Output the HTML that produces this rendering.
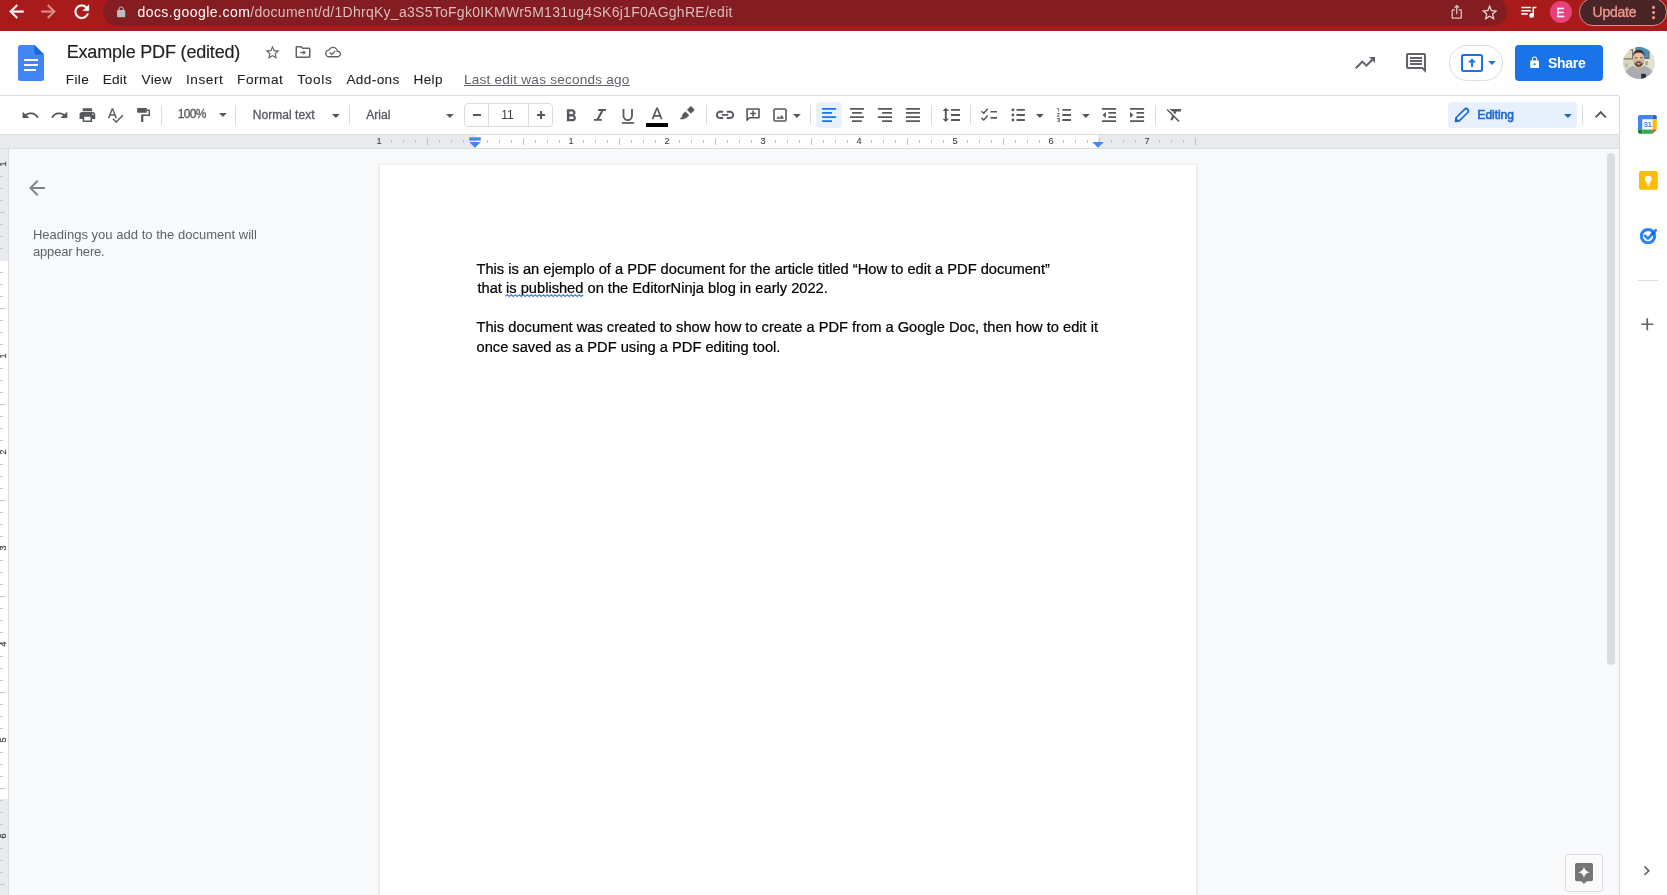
<!DOCTYPE html>
<html>
<head>
<meta charset="utf-8">
<title>Example PDF (edited)</title>
<style>
*{box-sizing:border-box;margin:0;padding:0}
html,body{width:1667px;height:895px;overflow:hidden;background:#fff;font-family:"Liberation Sans",sans-serif;}
body{position:relative}
.abs{position:absolute}
svg{position:absolute;display:block;overflow:visible}
.t{position:absolute;white-space:nowrap;line-height:1}
#chrome{position:absolute;left:0;top:0;width:1667px;height:31px;background:#a91b1b;overflow:hidden}
#pill{position:absolute;left:103px;top:-3px;width:1404px;height:29px;border-radius:14.5px;background:#831d21}
#hdrline{position:absolute;left:0;top:95px;width:1619px;height:1px;background:#dadce0}
.sep{position:absolute;top:105px;width:1px;height:20px;background:#dadce0}
#ruler{position:absolute;left:0;top:134px;width:1619px;height:15px;background:#e8eaed;border-top:1px solid #dadce0;border-bottom:1px solid #dadce0}
#rulerw{position:absolute;left:476px;top:135px;width:622px;height:13px;background:#fff}
#canvas{position:absolute;left:0;top:149px;width:1619px;height:746px;background:#f8f9fa}
#vruler{position:absolute;left:0;top:149px;width:8px;height:746px;background:#fff}
#page{position:absolute;left:380px;top:165px;width:816px;height:760px;background:#fff;box-shadow:0 1px 3px 1px rgba(60,64,67,.15)}
#side{position:absolute;left:1619px;top:96px;width:48px;height:799px;background:#fff;border-left:1px solid #dadce0}
.doc{position:absolute;font-size:14.667px;color:#000;white-space:nowrap;line-height:1}
.sq{text-decoration:underline wavy #4285f4;text-decoration-thickness:1px;text-underline-offset:2px}
#root{position:absolute;left:0;top:0;width:1667px;height:895px;will-change:transform}

</style>
</head>
<body>
<div id="root">
<div id="chrome"><div id="pill"></div>
<svg style="left:6.10px;top:1.00px" width="21.00" height="21.00" viewBox="0 0 24 24"><path fill="#fff" d="M20 11H7.83l5.59-5.59L12 4l-8 8 8 8 1.41-1.41L7.83 13H20v-2z" stroke="#fff" stroke-width="0.500"/></svg>
<svg style="left:38.10px;top:1.00px" width="21.00" height="21.00" viewBox="0 0 24 24"><path fill="#d98a8a" d="M12 4l-1.41 1.41L16.17 11H4v2h12.17l-5.58 5.59L12 20l8-8z" stroke="#d98a8a" stroke-width="0.500"/></svg>
<svg style="left:70.55px;top:0.95px" width="21.50" height="21.50" viewBox="0 0 24 24"><path fill="#fff" d="M17.65 6.35C16.2 4.9 14.21 4 12 4c-4.42 0-7.99 3.58-7.99 8s3.570 8 7.990 8c3.730 0 6.840-2.550 7.730-6h-2.080c-.820 2.330-3.040 4-5.650 4-3.310 0-6-2.690-6-6s2.690-6 6-6c1.660 0 3.140.690 4.220 1.780L13 11h7V4l-2.350 2.350z" stroke="#fff" stroke-width="0.300"/></svg>
<svg style="left:114.85px;top:5.91px" width="12.30" height="12.30" viewBox="0 0 24 24"><path fill="#b7bdc3" d="M18 8h-1V6c0-2.760-2.240-5-5-5S7 3.240 7 6v2H6c-1.100 0-2 .9-2 2v10c0 1.100.9 2 2 2h12c1.100 0 2-.9 2-2V10c0-1.100-.9-2-2-2zm-9-2c0-1.660 1.340-3 3-3s3 1.340 3 3v2H9V6z"/></svg>
<div class="t" id="url1" style="left:137.40px;top:5.000px;font-size:14.000px;color:#fff;letter-spacing:0.470px;">docs.google.com</div>
<div class="t" id="url2" style="left:250.30px;top:5.000px;font-size:14.000px;color:#dcbcbd;letter-spacing:0.271px;">/document/d/1DhrqKy_a3S5ToFgk0IKMWr5M131ug4SK6j1F0AGghRE/edit</div>
<svg style="left:1449.25px;top:4.25px" width="15.50" height="15.50" viewBox="0 0 24 24"><path fill="#dcc6c7" d="M16 5l-1.420 1.420-1.590-1.590V16h-1.980V4.830L9.420 6.420 8 5l4-4 4 4zm4 5v11c0 1.100-.9 2-2 2H6c-1.110 0-2-.9-2-2V10c0-1.110.890-2 2-2h3v2H6v11h12V10h-3V8h3c1.100 0 2 .890 2 2z"/></svg>
<svg style="left:1479.55px;top:2.50px" width="19.30" height="19.30" viewBox="0 0 24 24"><path fill="#e4d2d3" d="M22 9.240l-7.190-.620L12 2 9.190 8.630 2 9.240l5.460 4.730L5.820 21 12 17.270 18.180 21l-1.630-7.030L22 9.240zM12 15.400l-3.760 2.270 1-4.280-3.320-2.880 4.380-.380L12 6.100l1.710 4.040 4.380.380-3.320 2.880 1 4.280L12 15.400z"/></svg>
<svg style="left:1518.90px;top:1.71px" width="19.00" height="19.00" viewBox="0 0 24 24"><path fill="#fff" d="M15 6H3v2h12V6zm0 4H3v2h12v-2zM3 16h8v-2H3v2zM17 6v8.180c-.310-.110-.650-.180-1-.180-1.660 0-3 1.340-3 3s1.340 3 3 3 3-1.340 3-3V8h3V6h-5z"/></svg>
<div class="abs" style="left:1549.5px;top:1px;width:22px;height:22px;border-radius:11px;background:#e9407d"></div>
<div class="t" style="left:1556.20px;top:6.750px;font-size:12.500px;color:#fff;-webkit-text-stroke:0.3px #fff;">E</div>
<div class="abs" style="left:1579.4px;top:-1.700px;width:87.300px;height:27.400px;border-radius:13.700px;background:#492527;border:1px solid #e08a84"></div>
<div class="t" style="left:1592.60px;top:5.000px;font-size:14.000px;color:#f1978d;letter-spacing:-0.258px;-webkit-text-stroke:0.35px #f1978d;">Update</div>
<svg style="left:1650.100px;top:3px" width="7" height="19" viewBox="0 0 7 19"><g fill="#f1978d"><circle cx="3.5" cy="4.400" r="1.550"/><circle cx="3.5" cy="9.500" r="1.550"/><circle cx="3.5" cy="14.600" r="1.550"/></g></svg>
</div>
<div id="hdrline"></div>
<svg style="left:18px;top:45px" width="26" height="36" viewBox="0 0 26 36"><path fill="#4285f4" d="M2.500 0H16.500L26 9.500V33.500Q26 36 23.500 36H2.500Q0 36 0 33.500V2.500Q0 0 2.500 0z"/><path fill="#1967d2" d="M16.500 0L26 9.500H19Q16.500 9.500 16.500 7z"/><rect x="6" y="14" width="14" height="2" fill="#fff"/><rect x="6" y="19" width="14" height="2" fill="#fff"/><rect x="6" y="24" width="12" height="2" fill="#fff"/></svg>
<div class="t" id="title" style="left:66.70px;top:43.000px;font-size:18.000px;color:#202124;letter-spacing:-0.179px;-webkit-text-stroke:0.15px #202124;">Example PDF (edited)</div>
<svg style="left:264.45px;top:43.85px" width="17.00" height="17.00" viewBox="0 0 24 24"><path fill="#5f6368" d="M22 9.240l-7.190-.620L12 2 9.190 8.630 2 9.240l5.460 4.730L5.820 21 12 17.270 18.180 21l-1.630-7.030L22 9.240zM12 15.400l-3.760 2.270 1-4.280-3.320-2.880 4.380-.380L12 6.100l1.710 4.040 4.380.380-3.320 2.880 1 4.280L12 15.400z"/></svg>
<svg style="left:293.50px;top:43.00px" width="18.00" height="18.00" viewBox="0 0 24 24"><path fill="#5f6368" d="M20 6h-8l-2-2H4c-1.100 0-1.990.9-1.990 2L2 18c0 1.100.9 2 2 2h16c1.100 0 2-.9 2-2V8c0-1.100-.9-2-2-2zm0 12H4V6h5.170l2 2H20v10zm-7.500-2.500l3.500-3-3.500-3v2H8.500v2h4v2z"/></svg>
<svg style="left:325.00px;top:44.15px" width="16.10" height="16.10" viewBox="0 0 24 24"><path fill="#5f6368" d="M19.350 10.040C18.670 6.590 15.640 4 12 4 9.110 4 6.600 5.640 5.350 8.040 2.340 8.360 0 10.910 0 14c0 3.310 2.690 6 6 6h13c2.760 0 5-2.240 5-5 0-2.640-2.050-4.780-4.650-4.960zM19 18H6c-2.210 0-4-1.790-4-4s1.790-4 4-4h.710C7.370 7.690 9.480 6 12 6c3.040 0 5.500 2.460 5.500 5.500v.5H19c1.660 0 3 1.340 3 3s-1.340 3-3 3zm-9-3.820l-2.090-2.090L6.500 13.500 10 17l6.010-6.010-1.410-1.410z"/></svg>
<div class="t" id="m0" style="left:65.80px;top:72.700px;font-size:13.600px;color:#202124;letter-spacing:0.371px;-webkit-text-stroke:0.080px #202124;">File</div>
<div class="t" id="m1" style="left:102.80px;top:72.700px;font-size:13.600px;color:#202124;letter-spacing:0.191px;-webkit-text-stroke:0.080px #202124;">Edit</div>
<div class="t" id="m2" style="left:141.40px;top:72.700px;font-size:13.600px;color:#202124;letter-spacing:0.417px;-webkit-text-stroke:0.080px #202124;">View</div>
<div class="t" id="m3" style="left:185.90px;top:72.700px;font-size:13.600px;color:#202124;letter-spacing:0.598px;-webkit-text-stroke:0.080px #202124;">Insert</div>
<div class="t" id="m4" style="left:237.10px;top:72.700px;font-size:13.600px;color:#202124;letter-spacing:0.538px;-webkit-text-stroke:0.080px #202124;">Format</div>
<div class="t" id="m5" style="left:297.30px;top:72.700px;font-size:13.600px;color:#202124;letter-spacing:0.690px;-webkit-text-stroke:0.080px #202124;">Tools</div>
<div class="t" id="m6" style="left:346.40px;top:72.700px;font-size:13.600px;color:#202124;letter-spacing:0.392px;-webkit-text-stroke:0.080px #202124;">Add-ons</div>
<div class="t" id="m7" style="left:413.60px;top:72.700px;font-size:13.600px;color:#202124;letter-spacing:0.307px;-webkit-text-stroke:0.080px #202124;">Help</div>
<div class="t" id="lastedit" style="left:464.00px;top:72.700px;font-size:13.600px;color:#5f6368;letter-spacing:0.217px;text-decoration:underline;text-underline-offset:0.500px;text-decoration-thickness:1px;">Last edit was seconds ago</div>
<svg style="left:1353.20px;top:51.00px" width="24.00" height="24.00" viewBox="0 0 24 24"><path fill="#5f6368" d="M16 6l2.290 2.290-4.880 4.880-4-4L2 16.590 3.410 18l6-6 4 4 6.300-6.290L22 12V6z"/></svg>
<svg style="left:1403.700px;top:51px" width="24" height="24" viewBox="0 0 24 24"><path fill="#5f6368" d="M21.990 4c0-1.100-.890-2-1.990-2H4c-1.100 0-2 .9-2 2v12c0 1.100.9 2 2 2h14l4 4-.010-18zM20 4v13.170L18.830 16H4V4h16zM6 12h12v2H6zm0-3h12v2H6zm0-3h12v2H6z"/></svg>
<div class="abs" style="left:1449px;top:45px;width:54px;height:36px;border-radius:18px;border:1px solid #dadce0;background:#fff"></div>
<svg style="left:1461px;top:54px" width="22" height="18" viewBox="0 0 22 18"><rect x="1" y="1" width="20" height="16" rx="1.500" fill="none" stroke="#1a73e8" stroke-width="2"/><path fill="#1a73e8" d="M11 4.500L7 8.500h3v4.500h2V8.500h3z"/></svg>
<svg style="left:1488.400px;top:61.100px" width="7.800" height="3.900" viewBox="0 0 10 5"><path fill="#1a73e8" d="M0 0h10L5 5z"/></svg>
<div class="abs" style="left:1515px;top:45px;width:88px;height:36px;border-radius:4px;background:#1a73e8"></div>
<svg style="left:1527.90px;top:56.22px" width="13.20" height="13.20" viewBox="0 0 24 24"><path fill="#fff" d="M18 8h-1V6c0-2.760-2.240-5-5-5S7 3.240 7 6v2H6c-1.100 0-2 .9-2 2v10c0 1.100.9 2 2 2h12c1.100 0 2-.9 2-2V10c0-1.100-.9-2-2-2zm-6 9c-1.100 0-2-.9-2-2s.9-2 2-2 2 .9 2 2-.9 2-2 2zm3.100-9H8.900V6c0-1.710 1.390-3.100 3.100-3.100 1.710 0 3.100 1.390 3.100 3.100v2z"/></svg>
<div class="t" id="share" style="left:1548.00px;top:56.000px;font-size:14.000px;color:#fff;font-weight:700;letter-spacing:-0.302px;">Share</div>
<svg style="left:1623px;top:46.900px" width="32" height="32" viewBox="0 0 32 32"><defs><clipPath id="av"><circle cx="16" cy="16" r="16"/></clipPath><filter id="avb" x="-10%" y="-10%" width="120%" height="120%"><feGaussianBlur stdDeviation="0.550"/></filter></defs><g clip-path="url(#av)"><g filter="url(#avb)"><rect x="-2" y="-2" width="36" height="36" fill="#e3e1cf"/><rect x="0" y="2" width="10" height="10.500" fill="#70726e"/><rect x="1" y="3.300" width="8" height="8" fill="#dcd9b4"/><rect x="12.500" y="0" width="14" height="12" fill="#5d6a70"/><rect x="13.500" y="0.500" width="12" height="10.300" fill="#4a93b8"/><rect x="0" y="13" width="10" height="6" fill="#d9d6c0"/><rect x="2" y="16.500" width="3" height="4" fill="#b5c09c"/><rect x="22" y="14" width="3" height="4" fill="#a3b78e"/><path d="M-1 33Q0 23 10 18.500L15.500 22.500 21.500 18.500Q31 22 33 33z" fill="#a9adb3"/><path d="M12.300 19L15.500 25.500 19 19z" fill="#d4a58b"/><rect x="18.200" y="26.800" width="4.700" height="5" fill="#2a2f3a"/><ellipse cx="15.700" cy="11.300" rx="5.500" ry="7.700" fill="#deb096"/><ellipse cx="15.700" cy="9.500" rx="3.200" ry="2.800" fill="#ecc5ad"/><path d="M10 9.500Q9.800 2.800 15.700 2.800T21.500 9.500Q20.500 5.800 15.700 5.600T10 9.500z" fill="#3b2b23"/><path d="M10.400 13Q10.800 19.800 15.700 19.800T21 13Q20.500 16.300 18.900 16.600Q18.300 14.300 15.700 14.300T12.500 16.600Q10.900 16.300 10.400 13z" fill="#54433c"/><path d="M13.300 16.300Q15.700 15.300 18.100 16.300Q17.500 18 15.700 18T13.300 16.300z" fill="#c99a84"/><rect x="12.200" y="10.200" width="2.200" height="1" fill="#5a4a44"/><rect x="17" y="10.200" width="2.200" height="1" fill="#5a4a44"/></g></g></svg>
<div class="sep" style="left:161.0px"></div>
<div class="sep" style="left:234.9px"></div>
<div class="sep" style="left:349.1px"></div>
<div class="sep" style="left:706.0px"></div>
<div class="sep" style="left:810.0px"></div>
<div class="sep" style="left:931.0px"></div>
<div class="sep" style="left:970.1px"></div>
<div class="sep" style="left:1155.0px"></div>
<div class="sep" style="left:1582.1px"></div>
<svg style="left:21.21px;top:106.76px" width="18.90" height="16.63" viewBox="0 0 24 24" preserveAspectRatio="none"><path fill="#55585d" d="M12.500 8c-2.650 0-5.050.990-6.900 2.600L2 7v9h9l-3.620-3.620c1.390-1.160 3.160-1.880 5.120-1.880 3.540 0 6.550 2.310 7.600 5.500l2.370-.780C21.080 11.030 17.150 8 12.500 8z"/></svg>
<svg style="left:50.05px;top:106.76px" width="18.90" height="16.63" viewBox="0 0 24 24" preserveAspectRatio="none"><path fill="#55585d" d="M18.400 10.600C16.550 8.990 14.150 8 11.500 8c-4.650 0-8.580 3.030-9.960 7.220L3.900 16c1.050-3.190 4.050-5.500 7.600-5.500 1.950 0 3.730.720 5.120 1.880L13 16h9V7l-3.600 3.600z"/></svg>
<svg style="left:77.65px;top:105.73px" width="18.80" height="18.24" viewBox="0 0 24 24" preserveAspectRatio="none"><path fill="#55585d" d="M19 8H5c-1.660 0-3 1.340-3 3v6h4v4h12v-4h4v-6c0-1.660-1.340-3-3-3zm-3 11H8v-5h8v5zm3-7c-.550 0-1-.450-1-1s.450-1 1-1 1 .450 1 1-.450 1-1 1zm-1-9H6v4h12V3z"/></svg>
<svg style="left:105.97px;top:105.73px" width="18.20" height="18.20" viewBox="0 0 24 24" preserveAspectRatio="none"><path fill="#55585d" d="M12.450 16h2.090L9.430 3H7.570L2.460 16h2.090l1.120-3h5.640l1.140 3zm-6.020-5L8.500 5.480 10.570 11H6.430zm15.160.590l-8.090 8.090L9.830 16l-1.410 1.410 5.090 5.090L23 13l-1.410-1.410z"/></svg>
<div class="t" id="zoomt" style="left:177.80px;top:108.000px;font-size:12.000px;color:#55585d;letter-spacing:-0.698px;-webkit-text-stroke:0.3px #55585d;">100%</div>
<svg style="left:219.10px;top:113.05px" width="7.80" height="3.90" viewBox="0 0 10 5"><path fill="#55585d" d="M0 0h10L5 5z"/></svg>
<div class="t" style="left:252.70px;top:109.000px;font-size:12.000px;color:#55585d;letter-spacing:0.059px;-webkit-text-stroke:0.3px #55585d;">Normal text</div>
<svg style="left:331.90px;top:114.05px" width="7.80" height="3.90" viewBox="0 0 10 5"><path fill="#55585d" d="M0 0h10L5 5z"/></svg>
<div class="t" style="left:366.30px;top:109.000px;font-size:12.000px;color:#55585d;letter-spacing:-0.002px;-webkit-text-stroke:0.3px #55585d;">Arial</div>
<svg style="left:446.10px;top:114.05px" width="7.80" height="3.90" viewBox="0 0 10 5"><path fill="#55585d" d="M0 0h10L5 5z"/></svg>
<div class="abs" style="left:464px;top:103px;width:89px;height:24px;border:1px solid #dadce0;border-radius:4px"></div>
<div class="abs" style="left:488px;top:104px;width:1px;height:22px;background:#dadce0"></div>
<div class="abs" style="left:528px;top:104px;width:1px;height:22px;background:#dadce0"></div>
<div class="t" style="left:501.20px;top:109.000px;font-size:12.000px;color:#3c4043;">11</div>
<div class="abs" style="left:816px;top:102px;width:26px;height:26px;border-radius:4px;background:#e8f0fe"></div>
<svg style="left:561.42px;top:105.74px" width="20.20" height="20.20" viewBox="0 0 24 24" preserveAspectRatio="none"><path fill="#55585d" d="M15.600 10.790c.970-.670 1.650-1.770 1.650-2.790 0-2.260-1.750-4-4-4H7v14h7.040c2.090 0 3.710-1.700 3.710-3.790 0-1.520-.860-2.820-2.150-3.420zM10 6.500h3c.830 0 1.500.670 1.500 1.500s-.670 1.500-1.500 1.500h-3v-3zm3.500 9H10v-3h3.500c.830 0 1.500.670 1.500 1.500s-.670 1.500-1.500 1.500z"/></svg>
<svg style="left:647.12px;top:104.65px" width="20.16" height="20.16" viewBox="0 0 24 24" preserveAspectRatio="none"><path fill="#55585d" d="M11 3L5.500 17h2.250l1.120-3h6.250l1.120 3h2.250L13 3h-2zm-1.380 9L12 5.670 14.380 12H9.620z"/></svg>
<div class="abs" style="left:646px;top:122.800px;width:22.200px;height:4.200px;background:#000"></div>
<svg style="left:1165.35px;top:104.95px" width="19.30" height="19.30" viewBox="0 0 24 24" preserveAspectRatio="none"><path fill="#55585d" d="M3.270 5L2 6.270l6.970 6.970L6.500 19h3l1.570-3.660L16.730 21 18 19.730 3.550 5.270 3.270 5zM6 5v.180L8.820 8h2.400l-.720 1.680 2.100 2.100L14.210 8H20V5H6z"/></svg>
<svg style="left:792.80px;top:114.05px" width="7.80" height="3.90" viewBox="0 0 10 5"><path fill="#55585d" d="M0 0h10L5 5z"/></svg>
<svg style="left:1036.10px;top:114.05px" width="7.80" height="3.90" viewBox="0 0 10 5"><path fill="#55585d" d="M0 0h10L5 5z"/></svg>
<svg style="left:1082.10px;top:114.05px" width="7.80" height="3.90" viewBox="0 0 10 5"><path fill="#55585d" d="M0 0h10L5 5z"/></svg>
<div class="abs" style="left:1448px;top:102px;width:129px;height:26px;border-radius:4px;background:#e8f0fe"></div>
<svg style="left:0;top:96px" width="1619" height="38" viewBox="0 96 1619 38"><path d="M472.900 115H481M537 115H545.100M541.050 110.900V119.050" stroke="#55585d" stroke-width="2" fill="none"/><rect x="137.100" y="108" width="9.700" height="4.750" rx="0.700" fill="#55585d"/><path d="M146.800 110.300H149.300V115.300H142.200" stroke="#55585d" stroke-width="1.500" fill="none"/><rect x="141.100" y="114.550" width="2.250" height="7.400" fill="#55585d"/><path d="M598.200 109.100H606V111H603.400L599 118.900H601.800V120.800H594V118.900H596.600L601 111H598.200Z" fill="#55585d"/><path d="M623.500 109.100V115.850a4.250 4.250 0 0 0 8.500 0V109.100" stroke="#55585d" stroke-width="1.800" fill="none"/><rect x="622" y="122.100" width="11.900" height="1.700" fill="#55585d"/><path d="M690.900 106.300L694.400 109.900L690.900 113.300L687.400 109.900Z" fill="#55585d" stroke="#55585d" stroke-width="0.700" stroke-linejoin="round"/><path d="M685.400 111.800L689 115.200L686.100 118.100H684.700L683.800 119H680.100L682.500 116.400V114.600Z" fill="#55585d" stroke="#55585d" stroke-width="0.500" stroke-linejoin="round"/><path d="M723.200 111.700H720a3.150 3.150 0 0 0 0 6.300H723.200M726.800 111.700H730a3.150 3.150 0 0 1 0 6.300H726.800M721.800 114.850H728.200" stroke="#55585d" stroke-width="1.900" fill="none"/><path d="M747.100 109H759V117.800H749.500L747.100 120.200Z" stroke="#55585d" stroke-width="1.600" fill="none" stroke-linejoin="round"/><path d="M753.050 110.500V116.400M750.100 113.450H756" stroke="#55585d" stroke-width="1.600" fill="none"/><rect x="774" y="108.950" width="12" height="12.100" rx="1.300" stroke="#55585d" stroke-width="1.600" fill="none"/><path d="M776.200 118.700L778.400 116.300L779.800 117.700L782 115L783.800 118.700Z" fill="#55585d"/><path d="M822.10 108.00H836.10V109.80H822.10ZM822.10 112.07H832.05V113.87H822.10ZM822.10 116.13H836.10V117.93H822.10ZM822.10 120.20H832.05V122.00H822.10Z" fill="#1a73e8"/><path d="M849.95 108.00H863.90V109.80H849.95ZM852.05 112.07H861.80V113.87H852.05ZM849.95 116.13H863.90V117.93H849.95ZM852.05 120.20H861.80V122.00H852.05Z" fill="#55585d"/><path d="M877.90 108.00H891.95V109.80H877.90ZM882.10 112.07H891.95V113.87H882.10ZM877.90 116.13H891.95V117.93H877.90ZM882.10 120.20H891.95V122.00H882.10Z" fill="#55585d"/><path d="M905.90 108.00H919.95V109.80H905.90ZM905.90 112.07H919.95V113.87H905.90ZM905.90 116.13H919.95V117.93H905.90ZM905.90 120.20H919.95V122.00H905.90Z" fill="#55585d"/><path d="M945.800 107.700L949 111H946.750V118.800H949L945.800 122.100L942.600 118.800H944.850V111H942.600Z" fill="#55585d"/><path d="M951 109.900H960M951 114.950H960M951 120H960" stroke="#55585d" stroke-width="1.900" fill="none"/><path d="M981.400 111.200L983.750 113.300L987.700 108.800M981.400 117.900L983.750 120L987.700 115.500" stroke="#55585d" stroke-width="1.500" fill="none"/><path d="M990.500 111.750H997M990.500 117.900H997" stroke="#55585d" stroke-width="1.600" fill="none"/><path d="M1016.500 109.900H1024.900M1016.500 114.950H1024.900M1016.500 120H1024.900" stroke="#55585d" stroke-width="1.900" fill="none"/><circle cx="1012.900" cy="109.900" r="1.450" fill="#55585d"/><circle cx="1012.900" cy="114.950" r="1.450" fill="#55585d"/><circle cx="1012.900" cy="120" r="1.450" fill="#55585d"/><path d="M1062.300 109.900H1071M1062.300 114.950H1071M1062.300 120H1071" stroke="#55585d" stroke-width="1.900" fill="none"/><path d="M1057 108.500H1058.700V111.600M1057.100 113.500H1059.600L1057.200 116.300H1059.800M1057 118.500H1059.500V121.400H1057M1057.800 119.950H1059.500" stroke="#55585d" stroke-width="0.800" fill="none"/><path d="M1101.90 108.00H1116.10V109.80H1101.90ZM1108.40 112.07H1116.10V113.87H1108.40ZM1108.40 116.13H1116.10V117.93H1108.40ZM1101.90 120.20H1116.10V122.00H1101.90ZM1102.500 114.950L1105.900 111.900V118Z" fill="#55585d"/><path d="M1130.00 108.00H1144.10V109.80H1130.00ZM1136.50 112.07H1144.10V113.87H1136.50ZM1136.50 116.13H1144.10V117.93H1136.50ZM1130.00 120.20H1144.10V122.00H1130.00ZM1133.300 114.950L1130 111.900V118Z" fill="#55585d"/></svg>
<svg style="left:0;top:96px" width="1619" height="38" viewBox="0 96 1619 38"><g transform="translate(1458.500 118.500) rotate(-45)"><path d="M-1.200 -2.250H10.750a2.250 2.250 0 0 1 0 4.500H-1.200L-4.200 0Z" fill="none" stroke="#1967d2" stroke-width="1.700" stroke-linejoin="round"/><path d="M-1.200 -2.250L-4.600 0L-1.200 2.250Z" fill="#1967d2"/></g></svg>
<div class="t" id="editing" style="left:1477.50px;top:109.000px;font-size:12.000px;color:#1967d2;letter-spacing:-0.056px;-webkit-text-stroke:0.600px #1967d2;">Editing</div>
<svg style="left:1563.60px;top:114.05px" width="7.80" height="3.90" viewBox="0 0 10 5"><path fill="#1967d2" d="M0 0h10L5 5z"/></svg>
<svg style="left:1589.30px;top:103.34px" width="23.40" height="23.40" viewBox="0 0 24 24" preserveAspectRatio="none"><path fill="#55585d" d="M12 8l-6 6 1.410 1.410L12 10.830l4.590 4.580L18 14z"/></svg>
<div id="ruler"></div><div id="rulerw"></div>
<div class="t rl" style="left:369.0px;top:137.03px;width:20px;text-align:center;font-size:9.300px;color:#3c4043;-webkit-text-stroke:0.100px #3c4043">1</div><div class="abs" style="left:390.7px;top:140px;width:1px;height:3px;background:#bdc1c6"></div><div class="abs" style="left:402.7px;top:140px;width:1px;height:3px;background:#bdc1c6"></div><div class="abs" style="left:414.7px;top:140px;width:1px;height:3px;background:#bdc1c6"></div><div class="abs" style="left:426.7px;top:138px;width:1px;height:7px;background:#bdc1c6"></div><div class="abs" style="left:438.7px;top:140px;width:1px;height:3px;background:#bdc1c6"></div><div class="abs" style="left:450.7px;top:140px;width:1px;height:3px;background:#bdc1c6"></div><div class="abs" style="left:462.7px;top:140px;width:1px;height:3px;background:#bdc1c6"></div><div class="abs" style="left:486.7px;top:140px;width:1px;height:3px;background:#bdc1c6"></div><div class="abs" style="left:498.7px;top:140px;width:1px;height:3px;background:#bdc1c6"></div><div class="abs" style="left:510.7px;top:140px;width:1px;height:3px;background:#bdc1c6"></div><div class="abs" style="left:522.7px;top:138px;width:1px;height:7px;background:#bdc1c6"></div><div class="abs" style="left:534.7px;top:140px;width:1px;height:3px;background:#bdc1c6"></div><div class="abs" style="left:546.7px;top:140px;width:1px;height:3px;background:#bdc1c6"></div><div class="abs" style="left:558.7px;top:140px;width:1px;height:3px;background:#bdc1c6"></div><div class="t rl" style="left:561.0px;top:137.03px;width:20px;text-align:center;font-size:9.300px;color:#3c4043;-webkit-text-stroke:0.100px #3c4043">1</div><div class="abs" style="left:582.7px;top:140px;width:1px;height:3px;background:#bdc1c6"></div><div class="abs" style="left:594.7px;top:140px;width:1px;height:3px;background:#bdc1c6"></div><div class="abs" style="left:606.7px;top:140px;width:1px;height:3px;background:#bdc1c6"></div><div class="abs" style="left:618.7px;top:138px;width:1px;height:7px;background:#bdc1c6"></div><div class="abs" style="left:630.7px;top:140px;width:1px;height:3px;background:#bdc1c6"></div><div class="abs" style="left:642.7px;top:140px;width:1px;height:3px;background:#bdc1c6"></div><div class="abs" style="left:654.7px;top:140px;width:1px;height:3px;background:#bdc1c6"></div><div class="t rl" style="left:657.0px;top:137.03px;width:20px;text-align:center;font-size:9.300px;color:#3c4043;-webkit-text-stroke:0.100px #3c4043">2</div><div class="abs" style="left:678.7px;top:140px;width:1px;height:3px;background:#bdc1c6"></div><div class="abs" style="left:690.7px;top:140px;width:1px;height:3px;background:#bdc1c6"></div><div class="abs" style="left:702.7px;top:140px;width:1px;height:3px;background:#bdc1c6"></div><div class="abs" style="left:714.7px;top:138px;width:1px;height:7px;background:#bdc1c6"></div><div class="abs" style="left:726.7px;top:140px;width:1px;height:3px;background:#bdc1c6"></div><div class="abs" style="left:738.7px;top:140px;width:1px;height:3px;background:#bdc1c6"></div><div class="abs" style="left:750.7px;top:140px;width:1px;height:3px;background:#bdc1c6"></div><div class="t rl" style="left:753.0px;top:137.03px;width:20px;text-align:center;font-size:9.300px;color:#3c4043;-webkit-text-stroke:0.100px #3c4043">3</div><div class="abs" style="left:774.7px;top:140px;width:1px;height:3px;background:#bdc1c6"></div><div class="abs" style="left:786.7px;top:140px;width:1px;height:3px;background:#bdc1c6"></div><div class="abs" style="left:798.7px;top:140px;width:1px;height:3px;background:#bdc1c6"></div><div class="abs" style="left:810.7px;top:138px;width:1px;height:7px;background:#bdc1c6"></div><div class="abs" style="left:822.7px;top:140px;width:1px;height:3px;background:#bdc1c6"></div><div class="abs" style="left:834.7px;top:140px;width:1px;height:3px;background:#bdc1c6"></div><div class="abs" style="left:846.7px;top:140px;width:1px;height:3px;background:#bdc1c6"></div><div class="t rl" style="left:849.0px;top:137.03px;width:20px;text-align:center;font-size:9.300px;color:#3c4043;-webkit-text-stroke:0.100px #3c4043">4</div><div class="abs" style="left:870.7px;top:140px;width:1px;height:3px;background:#bdc1c6"></div><div class="abs" style="left:882.7px;top:140px;width:1px;height:3px;background:#bdc1c6"></div><div class="abs" style="left:894.7px;top:140px;width:1px;height:3px;background:#bdc1c6"></div><div class="abs" style="left:906.7px;top:138px;width:1px;height:7px;background:#bdc1c6"></div><div class="abs" style="left:918.7px;top:140px;width:1px;height:3px;background:#bdc1c6"></div><div class="abs" style="left:930.7px;top:140px;width:1px;height:3px;background:#bdc1c6"></div><div class="abs" style="left:942.7px;top:140px;width:1px;height:3px;background:#bdc1c6"></div><div class="t rl" style="left:945.0px;top:137.03px;width:20px;text-align:center;font-size:9.300px;color:#3c4043;-webkit-text-stroke:0.100px #3c4043">5</div><div class="abs" style="left:966.7px;top:140px;width:1px;height:3px;background:#bdc1c6"></div><div class="abs" style="left:978.7px;top:140px;width:1px;height:3px;background:#bdc1c6"></div><div class="abs" style="left:990.7px;top:140px;width:1px;height:3px;background:#bdc1c6"></div><div class="abs" style="left:1002.7px;top:138px;width:1px;height:7px;background:#bdc1c6"></div><div class="abs" style="left:1014.7px;top:140px;width:1px;height:3px;background:#bdc1c6"></div><div class="abs" style="left:1026.7px;top:140px;width:1px;height:3px;background:#bdc1c6"></div><div class="abs" style="left:1038.7px;top:140px;width:1px;height:3px;background:#bdc1c6"></div><div class="t rl" style="left:1041.0px;top:137.03px;width:20px;text-align:center;font-size:9.300px;color:#3c4043;-webkit-text-stroke:0.100px #3c4043">6</div><div class="abs" style="left:1062.7px;top:140px;width:1px;height:3px;background:#bdc1c6"></div><div class="abs" style="left:1074.7px;top:140px;width:1px;height:3px;background:#bdc1c6"></div><div class="abs" style="left:1086.7px;top:140px;width:1px;height:3px;background:#bdc1c6"></div><div class="abs" style="left:1098.7px;top:138px;width:1px;height:7px;background:#bdc1c6"></div><div class="abs" style="left:1110.7px;top:140px;width:1px;height:3px;background:#bdc1c6"></div><div class="abs" style="left:1122.7px;top:140px;width:1px;height:3px;background:#bdc1c6"></div><div class="abs" style="left:1134.7px;top:140px;width:1px;height:3px;background:#bdc1c6"></div><div class="t rl" style="left:1137.0px;top:137.03px;width:20px;text-align:center;font-size:9.300px;color:#3c4043;-webkit-text-stroke:0.100px #3c4043">7</div><div class="abs" style="left:1158.7px;top:140px;width:1px;height:3px;background:#bdc1c6"></div><div class="abs" style="left:1170.7px;top:140px;width:1px;height:3px;background:#bdc1c6"></div><div class="abs" style="left:1182.7px;top:140px;width:1px;height:3px;background:#bdc1c6"></div><div class="abs" style="left:1194.7px;top:138px;width:1px;height:7px;background:#bdc1c6"></div>
<svg style="left:469px;top:137px" width="12" height="11" viewBox="0 0 12 11"><rect x="0.200" y="0.300" width="11.600" height="3.300" fill="#4285f4"/><path fill="#4285f4" d="M0.200 5.100h11.600L6 10.800z"/></svg>
<svg style="left:1092px;top:137px" width="12" height="11" viewBox="0 0 12 11"><path fill="#4285f4" d="M0.200 4.900h11.600L6 10.700z"/></svg>
<div id="canvas"></div>
<div id="vruler"></div>
<div class="abs" style="left:0;top:149px;width:8px;height:111.700px;background:#e8eaed"></div>
<div class="abs" style="left:0;top:799px;width:8px;height:96px;background:#e8eaed"></div>
<div class="t" style="left:-2.500px;top:158.7px;width:10px;height:10px;font-size:9px;color:#3c4043;transform:rotate(-90deg);text-align:center;line-height:10px;-webkit-text-stroke:0.2px #3c4043">1</div><div class="abs" style="left:0px;top:176.0px;width:3px;height:1px;background:#c6c9ce"></div><div class="abs" style="left:0px;top:188.0px;width:3px;height:1px;background:#c6c9ce"></div><div class="abs" style="left:0px;top:200.0px;width:3px;height:1px;background:#c6c9ce"></div><div class="abs" style="left:0px;top:212.0px;width:5px;height:1px;background:#c2c5ca"></div><div class="abs" style="left:0px;top:224.0px;width:3px;height:1px;background:#c6c9ce"></div><div class="abs" style="left:0px;top:236.0px;width:3px;height:1px;background:#c6c9ce"></div><div class="abs" style="left:0px;top:248.0px;width:3px;height:1px;background:#c6c9ce"></div><div class="abs" style="left:0px;top:272.0px;width:3px;height:1px;background:#c6c9ce"></div><div class="abs" style="left:0px;top:284.0px;width:3px;height:1px;background:#c6c9ce"></div><div class="abs" style="left:0px;top:296.0px;width:3px;height:1px;background:#c6c9ce"></div><div class="abs" style="left:0px;top:308.0px;width:5px;height:1px;background:#c2c5ca"></div><div class="abs" style="left:0px;top:320.0px;width:3px;height:1px;background:#c6c9ce"></div><div class="abs" style="left:0px;top:332.0px;width:3px;height:1px;background:#c6c9ce"></div><div class="abs" style="left:0px;top:344.0px;width:3px;height:1px;background:#c6c9ce"></div><div class="t" style="left:-2.500px;top:350.7px;width:10px;height:10px;font-size:9px;color:#3c4043;transform:rotate(-90deg);text-align:center;line-height:10px;-webkit-text-stroke:0.2px #3c4043">1</div><div class="abs" style="left:0px;top:368.0px;width:3px;height:1px;background:#c6c9ce"></div><div class="abs" style="left:0px;top:380.0px;width:3px;height:1px;background:#c6c9ce"></div><div class="abs" style="left:0px;top:392.0px;width:3px;height:1px;background:#c6c9ce"></div><div class="abs" style="left:0px;top:404.0px;width:5px;height:1px;background:#c2c5ca"></div><div class="abs" style="left:0px;top:416.0px;width:3px;height:1px;background:#c6c9ce"></div><div class="abs" style="left:0px;top:428.0px;width:3px;height:1px;background:#c6c9ce"></div><div class="abs" style="left:0px;top:440.0px;width:3px;height:1px;background:#c6c9ce"></div><div class="t" style="left:-2.500px;top:446.7px;width:10px;height:10px;font-size:9px;color:#3c4043;transform:rotate(-90deg);text-align:center;line-height:10px;-webkit-text-stroke:0.2px #3c4043">2</div><div class="abs" style="left:0px;top:464.0px;width:3px;height:1px;background:#c6c9ce"></div><div class="abs" style="left:0px;top:476.0px;width:3px;height:1px;background:#c6c9ce"></div><div class="abs" style="left:0px;top:488.0px;width:3px;height:1px;background:#c6c9ce"></div><div class="abs" style="left:0px;top:500.0px;width:5px;height:1px;background:#c2c5ca"></div><div class="abs" style="left:0px;top:512.0px;width:3px;height:1px;background:#c6c9ce"></div><div class="abs" style="left:0px;top:524.0px;width:3px;height:1px;background:#c6c9ce"></div><div class="abs" style="left:0px;top:536.0px;width:3px;height:1px;background:#c6c9ce"></div><div class="t" style="left:-2.500px;top:542.7px;width:10px;height:10px;font-size:9px;color:#3c4043;transform:rotate(-90deg);text-align:center;line-height:10px;-webkit-text-stroke:0.2px #3c4043">3</div><div class="abs" style="left:0px;top:560.0px;width:3px;height:1px;background:#c6c9ce"></div><div class="abs" style="left:0px;top:572.0px;width:3px;height:1px;background:#c6c9ce"></div><div class="abs" style="left:0px;top:584.0px;width:3px;height:1px;background:#c6c9ce"></div><div class="abs" style="left:0px;top:596.0px;width:5px;height:1px;background:#c2c5ca"></div><div class="abs" style="left:0px;top:608.0px;width:3px;height:1px;background:#c6c9ce"></div><div class="abs" style="left:0px;top:620.0px;width:3px;height:1px;background:#c6c9ce"></div><div class="abs" style="left:0px;top:632.0px;width:3px;height:1px;background:#c6c9ce"></div><div class="t" style="left:-2.500px;top:638.7px;width:10px;height:10px;font-size:9px;color:#3c4043;transform:rotate(-90deg);text-align:center;line-height:10px;-webkit-text-stroke:0.2px #3c4043">4</div><div class="abs" style="left:0px;top:656.0px;width:3px;height:1px;background:#c6c9ce"></div><div class="abs" style="left:0px;top:668.0px;width:3px;height:1px;background:#c6c9ce"></div><div class="abs" style="left:0px;top:680.0px;width:3px;height:1px;background:#c6c9ce"></div><div class="abs" style="left:0px;top:692.0px;width:5px;height:1px;background:#c2c5ca"></div><div class="abs" style="left:0px;top:704.0px;width:3px;height:1px;background:#c6c9ce"></div><div class="abs" style="left:0px;top:716.0px;width:3px;height:1px;background:#c6c9ce"></div><div class="abs" style="left:0px;top:728.0px;width:3px;height:1px;background:#c6c9ce"></div><div class="t" style="left:-2.500px;top:734.7px;width:10px;height:10px;font-size:9px;color:#3c4043;transform:rotate(-90deg);text-align:center;line-height:10px;-webkit-text-stroke:0.2px #3c4043">5</div><div class="abs" style="left:0px;top:752.0px;width:3px;height:1px;background:#c6c9ce"></div><div class="abs" style="left:0px;top:764.0px;width:3px;height:1px;background:#c6c9ce"></div><div class="abs" style="left:0px;top:776.0px;width:3px;height:1px;background:#c6c9ce"></div><div class="abs" style="left:0px;top:788.0px;width:5px;height:1px;background:#c2c5ca"></div><div class="abs" style="left:0px;top:800.0px;width:3px;height:1px;background:#c6c9ce"></div><div class="abs" style="left:0px;top:812.0px;width:3px;height:1px;background:#c6c9ce"></div><div class="abs" style="left:0px;top:824.0px;width:3px;height:1px;background:#c6c9ce"></div><div class="t" style="left:-2.500px;top:830.7px;width:10px;height:10px;font-size:9px;color:#3c4043;transform:rotate(-90deg);text-align:center;line-height:10px;-webkit-text-stroke:0.2px #3c4043">6</div><div class="abs" style="left:0px;top:848.0px;width:3px;height:1px;background:#c6c9ce"></div><div class="abs" style="left:0px;top:860.0px;width:3px;height:1px;background:#c6c9ce"></div><div class="abs" style="left:0px;top:872.0px;width:3px;height:1px;background:#c6c9ce"></div><div class="abs" style="left:0px;top:884.0px;width:5px;height:1px;background:#c2c5ca"></div>
<div class="abs" style="left:8px;top:149px;width:1px;height:746px;background:#dadce0"></div>
<svg style="left:25.30px;top:176.00px" width="24.00" height="24.00" viewBox="0 0 24 24"><path fill="#80868b" d="M20 11H7.83l5.59-5.59L12 4l-8 8 8 8 1.41-1.41L7.83 13H20v-2z"/></svg>
<div class="t" id="ol1" style="left:32.90px;top:228.000px;font-size:13.000px;color:#5f6368;letter-spacing:0.019px;">Headings you add to the document will</div>
<div class="t" style="left:33.00px;top:245.000px;font-size:13.000px;color:#5f6368;letter-spacing:-0.185px;">appear here.</div>
<div id="page"></div>
<div class="t" id="d0" style="left:476.50px;top:261.666px;font-size:14.667px;color:#000;-webkit-text-stroke:0.22px #000;">This is an ejemplo of a PDF document for the article titled &ldquo;How to edit a PDF document&rdquo;</div>
<div class="t" id="d1" style="left:477.50px;top:280.666px;font-size:14.667px;color:#000;-webkit-text-stroke:0.22px #000;">that is published on the EditorNinja blog in early 2022.</div>
<div class="t" id="d2" style="left:476.50px;top:319.666px;font-size:14.667px;color:#000;-webkit-text-stroke:0.22px #000;">This document was created to show how to create a PDF from a Google Doc, then how to edit it</div>
<div class="t" id="d3" style="left:476.50px;top:339.666px;font-size:14.667px;color:#000;-webkit-text-stroke:0.22px #000;">once saved as a PDF using a PDF editing tool.</div>
<svg style="left:0;top:0" width="1667" height="895" viewBox="0 0 1667 895"><path d="M505.300 296.400L507.3 294.7L509.3 296.4L511.3 294.7L513.3 296.4L515.3 294.7L517.3 296.4L519.3 294.7L521.3 296.4L523.3 294.7L525.3 296.4L527.3 294.7L529.3 296.4L531.3 294.7L533.3 296.4L535.3 294.7L537.3 296.4L539.3 294.7L541.3 296.4L543.3 294.7L545.3 296.4L547.3 294.7L549.3 296.4L551.3 294.7L553.3 296.4L555.3 294.7L557.3 296.4L559.3 294.7L561.3 296.4L563.3 294.7L565.3 296.4L567.3 294.7L569.3 296.4L571.3 294.7L573.3 296.4L575.3 294.7L577.3 296.4L579.3 294.7L581.3 296.4L583.3 294.7" fill="none" stroke="#4285f4" stroke-width="1.150"/></svg>
<div class="abs" style="left:1607px;top:152.900px;width:8px;height:512px;border-radius:4px;background:#dadce0"></div>
<div class="abs" style="left:1565px;top:854px;width:38px;height:38px;border-radius:3.500px;background:#fafafa;border:1px solid #dadce0"></div>
<svg style="left:1575px;top:862.800px" width="18" height="21.200" viewBox="0 0 18 21.200"><path fill="#757575" d="M1.800 0H16.200Q18 0 18 1.800V16.400Q18 18.200 16.200 18.200H11.700L9 21 6.300 18.200H1.800Q0 18.200 0 16.400V1.800Q0 0 1.800 0z"/><path fill="#fff" d="M9 3.300Q9.700 8.500 14.700 9.200Q9.700 9.900 9 15.100Q8.300 9.900 3.300 9.200Q8.300 8.500 9 3.300z"/></svg>
<div id="side"></div>
<svg style="left:1638.400px;top:114.600px" width="18.800" height="18.800" viewBox="0 0 19 19"><rect x="0" y="0" width="19" height="19" rx="1.800" fill="#fff"/><path d="M0 1.800Q0 0 1.800 0H14.700V4.300H4.300V14.700H0z" fill="#4285f4"/><path d="M14.700 0H17.200Q19 0 19 1.800V4.300H14.700z" fill="#1967d2"/><path d="M14.700 4.300H19V14.700H14.700z" fill="#fbbc04"/><path d="M0 14.700H4.300V19H1.800Q0 19 0 17.200z" fill="#188038"/><path d="M4.300 14.700H14.700V19H4.300z" fill="#34a853"/><path d="M14.700 14.700H19L14.700 19z" fill="#ea4335"/><text x="9.500" y="12.600" font-family="Liberation Sans, sans-serif" font-size="8.200" font-weight="700" fill="#4285f4" text-anchor="middle" letter-spacing="-0.500">31</text></svg>
<svg style="left:1638.700px;top:170.500px" width="18.800" height="18.800" viewBox="0 0 19 19"><rect width="19" height="19" rx="1.800" fill="#fbbc04"/><circle cx="9.400" cy="8.200" r="3.400" fill="#fff"/><rect x="7.600" y="10.800" width="3.600" height="2.100" fill="#fff"/><rect x="7.600" y="13.700" width="3.600" height="1.200" fill="#fff"/></svg>
<svg style="left:0;top:0" width="1667" height="895" viewBox="0 0 1667 895"><circle cx="1648" cy="236.100" r="6.680" fill="#fff" stroke="#2684fc" stroke-width="3.050"/><path d="M1644.900 235.600L1647.900 238.600L1655.700 230.300" fill="none" stroke="#2684fc" stroke-width="2.700" stroke-linecap="round" stroke-linejoin="round"/><path d="M1651.600 234.650L1654.300 231.800" fill="none" stroke="#0b66d9" stroke-width="2.700"/></svg>
<div class="abs" style="left:1638px;top:280px;width:20px;height:1px;background:#dadce0"></div>
<svg style="left:1637.25px;top:314.35px" width="20.50" height="20.50" viewBox="0 0 24 24"><path fill="#5f6368" d="M19 13h-6v6h-2v-6H5v-2h6V5h2v6h6v2z"/></svg>
<svg style="left:1637.11px;top:861.35px" width="19.40" height="19.40" viewBox="0 0 24 24"><path fill="#5f6368" d="M10 6L8.590 7.410 13.170 12l-4.580 4.590L10 18l6-6z"/></svg>
</div>
</body>
</html>
